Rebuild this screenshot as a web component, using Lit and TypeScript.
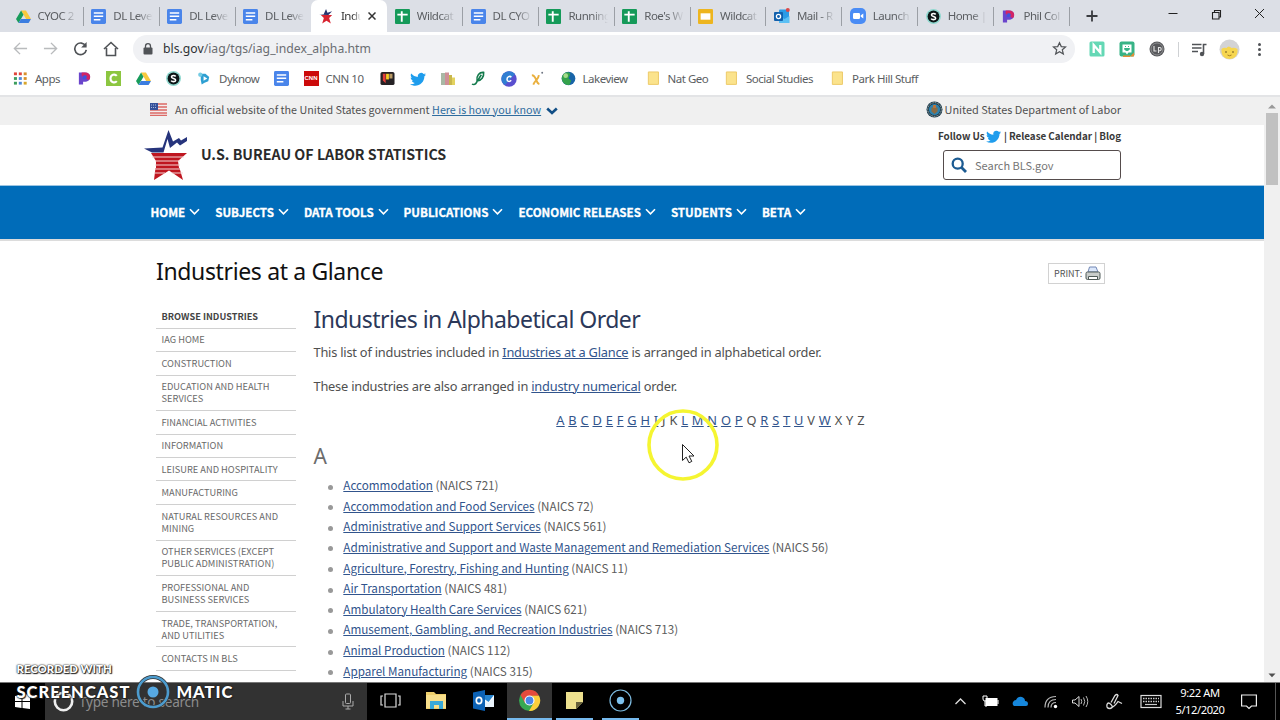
import { LitElement, html, svg, css } from "lit";
import { customElement } from "lit/decorators.js";

const box = (size: number, body: unknown, view = "0 0 16 16") =>
  html`<svg width=${size} height=${size} viewBox=${view} fill="none">${body}</svg>`;

const bird = svg`<path d="M16 3.500c-.6.300-1.200.5-1.800.5.700-.4 1.100-1 1.400-1.700-.6.300-1.300.6-2 .7a3.300 3.300 0 0 0-5.700 3C5.200 5.900 2.800 4.600 1.200 2.600c-.9 1.500-.4 3.400 1 4.300-.5 0-1-.2-1.500-.4 0 1.600 1.100 2.900 2.600 3.200-.5.100-1 .2-1.400.1.400 1.300 1.600 2.200 3 2.200A6.600 6.600 0 0 1 0 13.300c6.700 4 14.500-.6 14.400-8.100.6-.4 1.200-1 1.600-1.700z" fill="#1f9ded"/>`;

const icons: Record<string, unknown> = {
  drive: box(15, svg`<path d="M5.4 1.5h5.2L16 10.6h-5.2z" fill="#f8c93e"/><path d="M5.4 1.5 8 6 2.7 14.8 0 10.6z" fill="#189c5b"/><path d="M5.3 10.6H16l-2.6 4.2H2.7z" fill="#3b7de0"/>`),
  docs: box(15, svg`<rect width="16" height="16" rx="1.5" fill="#4a85ea"/><path d="M3 4.2h10M3 7.8h10M3 11.5h7" stroke="#fff" stroke-width="1.7"/>`),
  sheets: box(15, svg`<rect width="16" height="16" rx="1.2" fill="#159a59"/><path d="M7.2 2.5v11M2.5 6h11" stroke="#fff" stroke-width="2"/>`),
  slides: box(15, svg`<rect width="16" height="16" rx="1.2" fill="#edb51f"/><rect x="2.8" y="4.6" width="10.4" height="6.8" fill="#fff"/>`),
  star: box(15, svg`<path d="m0 6 5-.3L7.500 0l1.500 4 5-1.500-4 4z" fill="#26356f"/><path d="M2 6.500h12l-3.200 3 1.800 6-4.600-3-4.600 3 1.800-6z" fill="#d8232f"/>`),
  outlook: box(16, svg`<rect x="5" y="1.500" width="10" height="12" rx="1" fill="#2a9be6"/><path d="M5 8l5.500 3L15.500 8v7H5z" fill="#5bc0f4"/><rect y="4" width="9" height="9" rx="1" fill="#1261ad"/><circle cx="4.500" cy="8.500" r="2.100" stroke="#fff" stroke-width="1.300"/><circle cx="13.800" cy="2" r="2" fill="#d84848"/>`),
  zoom: box(16, svg`<rect width="16" height="16" rx="5" fill="#4a8cf5"/><rect x="3" y="5" width="7" height="6" rx="1.200" fill="#fff"/><path d="m10.600 7.500 2.700-2v5l-2.700-2z" fill="#fff"/>`),
  esse: box(15, svg`<circle cx="8" cy="8" r="8" fill="#8fd8cf"/><circle cx="8" cy="8" r="6.300" fill="#0b1516"/><path d="M10.300 5.800C9.500 4.600 6 4.300 5.900 6.300c0 2 4.400 1.400 4.400 3.500 0 2-3.900 1.900-4.800.4" stroke="#fff" stroke-width="1.700"/>`),
  pandora: box(15, svg`<path fill-rule="evenodd" d="M2 1.500h6.500c3.500 0 5.500 1.800 5.500 4.700 0 3.300-2.300 5.300-6 5.300H6.500v3H2z" fill="#6a45cc"/><path d="M5 1.500h3.500c3.500 0 5.500 1.800 5.500 4.700 0 1.500-.5 2.800-1.300 3.700L5 5z" fill="#d32464"/><path d="M7 4.500h1.500q2 0 2 1.900T8 8.500H6z" fill="#3d55dd"/>`),
  cgreen: box(15, svg`<rect width="16" height="16" fill="#8cc640"/><path d="M11.500 5.200C9.500 2.700 4.800 3.800 4.800 8s4.700 5.300 6.700 2.800" stroke="#fff" stroke-width="2.200"/>`),
  dyknow: box(15, svg`<path d="M4 3h5l4 3.500-1 4.500-4 1.500-3 2-1-5z" fill="#2d9fd2"/><path d="M7 5.500v5l4-2.500z" fill="#fff"/><circle cx="3.500" cy="4" r="2.300" fill="#74cbe3"/>`),
  cnn: html`<span class="cnn">CNN</span>`,
  palette: box(15, svg`<rect x=".5" y="1" width="15" height="14" rx="2" fill="#262225"/><path d="M3 3h3v10L3 10z" fill="#e43e3a"/><path d="M6.500 3h3v6h-3z" fill="#f9cf25"/><path d="M10 3h3.300v5H10z" fill="#b99a65"/>`),
  twitter: box(16, bird),
  books: box(16, svg`<path d="M1 2h4v12H1z" fill="#a9b8a5"/><path d="M5 1.500h4V14H5z" fill="#cf8f97"/><path d="M9 4h3v10H9z" fill="#c8b74d"/><path d="M12 6.500h3V14h-3z" fill="#e3d25f"/>`),
  leaf: box(15, svg`<path d="M13.500 1.500C9 1 5.500 5 6.500 10.500 11 10.500 14 6 13.500 1.500zM11 4 5 13.500q-1.500 1.500-4 .5" stroke="#137a4c" stroke-width="1.700"/>`),
  canva: box(16, svg`<circle cx="8" cy="8" r="7.700" fill="#5a4fcf"/><path d="M.8 5.500A7.700 7.700 0 0 1 14 3L4 14A7.700 7.700 0 0 1 .8 5.500" fill="#307ed2"/><path d="M10.300 6.200C9 4.500 6 5.800 6 8.300c0 2.400 2.800 2.800 4.200 1" stroke="#fff" stroke-width="1.500"/>`),
  xfig: box(15, svg`<path d="M2 4.500c5 0 4 8.500 8 9.500M9.500 4.500C9 9 6 9 3.500 14.500" stroke="#eab03e" stroke-width="2"/><circle cx="13" cy="1.800" r="1" fill="#6c7380"/>`),
  globe: box(15, svg`<circle cx="8" cy="8" r="7.300" fill="#1864a8"/><path d="M2 4C5 0 9 1 10 3L8 8l3 2-2 5C3 15 0 10 1 6z" fill="#35a24b"/><circle cx="5" cy="5" r="2.500" fill="#a6da8a"/>`),
  folder: box(15, svg`<path d="M2.500 1h10.800v11.500l-1 1.800H2.500z" fill="#fbe38c"/><path d="M2.500 1h10.800v13.300H2.500z" stroke="#ecc965"/>`),
};

const tabs: [string, string][] = [
  ["drive", "CYOC 2"], ["docs", "DL Level"], ["docs", "DL Level"], ["docs", "DL Level"], ["star", "Indus"],
  ["sheets", "Wildcat"], ["docs", "DL CYO"], ["sheets", "Running"], ["sheets", "Roe's W"], ["slides", "Wildcat"],
  ["outlook", "Mail - R"], ["zoom", "Launch"], ["esse", "Home |"], ["pandora", "Phil Col"],
];

const bookmarks: [string, string, number][] = [
  ["apps", "Apps", 63.5], ["pandora", "", 29], ["cgreen", "", 30.5], ["drive", "", 30], ["esse", "", 31],
  ["dyknow", "Dyknow", 76.5], ["docs", "", 30], ["cnn", "CNN 10", 76.5], ["palette", "", 30], ["twitter", "", 30],
  ["books", "", 31], ["leaf", "", 29.5], ["canva", "", 29.5], ["xfig", "", 30.5], ["globe", "Lakeview", 85],
  ["folder", "Nat Geo", 78.5], ["folder", "Social Studies", 106], ["folder", "Park Hill Stuff", 100],
];

const appColors = ["#e0453b", "#e0453b", "#d8902c", "#3c9d5c", "#4e87d8", "#d8902c", "#3c9d5c", "#4e87d8", "#d8a62c"];
icons.apps = box(15, appColors.map((c, i) => svg`<rect x=${1 + (i % 3) * 5.2} y=${1.5 + Math.floor(i / 3) * 5} width="3.2" height="3" fill=${c}/>`));

const menu = ["HOME", "SUBJECTS", "DATA TOOLS", "PUBLICATIONS", "ECONOMIC RELEASES", "STUDENTS", "BETA"];

const side = ["IAG HOME", "CONSTRUCTION", "EDUCATION AND HEALTH|SERVICES", "FINANCIAL ACTIVITIES", "INFORMATION",
  "LEISURE AND HOSPITALITY", "MANUFACTURING", "NATURAL RESOURCES AND|MINING", "OTHER SERVICES (EXCEPT|PUBLIC ADMINISTRATION)",
  "PROFESSIONAL AND|BUSINESS SERVICES", "TRADE, TRANSPORTATION,|AND UTILITIES", "CONTACTS IN BLS"];

const industries: [string, string][] = [
  ["Accommodation", "721"], ["Accommodation and Food Services", "72"], ["Administrative and Support Services", "561"],
  ["Administrative and Support and Waste Management and Remediation Services", "56"],
  ["Agriculture, Forestry, Fishing and Hunting", "11"], ["Air Transportation", "481"], ["Ambulatory Health Care Services", "621"],
  ["Amusement, Gambling, and Recreation Industries", "713"], ["Animal Production", "112"], ["Apparel Manufacturing", "315"],
];

@customElement("browser-chrome")
class BrowserChrome extends LitElement {
  static styles = css`
    :host { display: block; font-family: "Noto Sans", "Open Sans", sans-serif; color: #5b5e62; font-size: 11.500px; }
    svg { display: block; flex: none; }
    .tabs { display: flex; height: 32px; background: #dcdfe6; padding-left: 8px; }
    .tab { width: 75.85px; display: flex; align-items: center; box-sizing: border-box; padding: 0 7px 0 7.5px; gap: 7px; position: relative; }
    .tab.sep::after { content: ""; position: absolute; right: 0; top: 7px; height: 19px; width: 1px; background: #9b9fa5; }
    .active { background: #fff; border-radius: 7px 7px 0 0; }
    .title { flex: 1; white-space: nowrap; overflow: hidden; line-height: 18px; letter-spacing: -.5px;
      -webkit-mask-image: linear-gradient(90deg, #000 60%, transparent 100%); mask-image: linear-gradient(90deg, #000 60%, transparent 100%); }
    .active .title { flex: none; width: 20px; color: #333; }
    .window { flex: 1; display: flex; align-items: center; }
    .plus { margin-left: 16px; }
    .min { margin-left: 70px; }
    .max { margin-left: 33px; }
    .close { margin-left: 32px; margin-top: -5px; }
    .min, .max { margin-top: -4px; }
    .bar { height: 33px; display: flex; align-items: center; background: #fff; padding-left: 13px; }
    .nav { display: flex; gap: 15px; width: 120px; }
    .url { width: 942px; height: 28px; border-radius: 14px; background: #f0f1f4; display: flex; align-items: center; box-sizing: border-box; padding: 0 8px 0 9px; font-size: 12.230px; color: #6a6d71; }
    .url span { flex: 1; margin-left: 9px; line-height: 18px; }
    .url b { font-weight: 400; color: #2f3235; }
    .ext { display: flex; align-items: center; }
    .marks { display: flex; align-items: center; background: #fff; padding: 0 0 3px 13px; border-bottom: 2px solid #e3e4e6; box-sizing: border-box; height: 32px; }
    .mark { display: flex; align-items: center; gap: 7px; white-space: nowrap; line-height: 18px; letter-spacing: -.48px; }
    .cnn { width: 15px; height: 15px; background: #cc0a0a; color: #fff; font: bold 6px/15px "Liberation Sans", sans-serif; text-align: center; letter-spacing: 0; }
  `;
  render() {
    return html`
      <div class="tabs">
        ${tabs.map(([icon, title], i) => html`<div class="tab ${i === 4 ? "active" : i === 3 ? "" : "sep"}">
          ${icons[icon]}<span class="title">${title}</span>
          ${i === 4 ? box(8, svg`<path d="m.5.5 7 7M7.500.5l-7 7" stroke="#333" stroke-width="1.500"/>`, "0 0 8 8") : ""}
        </div>`)}
        <div class="window">
          <div class="plus">${box(12, svg`<path d="M6 .5v11M.5 6h11" stroke="#3a3c40" stroke-width="1.800"/>`, "0 0 12 12")}</div>
          <div class="min">${box(10, svg`<path d="M.5 4.500h9" stroke="#222"/>`, "0 0 10 10")}</div>
          <div class="max">${box(11, svg`<path d="M1.500 3.500h6.500v6.500h-6.500zM3.500 3V1.500h6v6.500H8" stroke="#222" stroke-width="1.100"/>`, "0 0 11 11")}</div>
          <div class="close">${box(11, svg`<path d="m1 1 9 9M10 1l-9 9" stroke="#222"/>`, "0 0 11 11")}</div>
        </div>
      </div>
      <div class="bar">
        <div class="nav">
          ${box(15, svg`<path d="M15 8H2M7.500 2 1.500 8l6 6" stroke="#b9bbbd" stroke-width="1.500"/>`)}
          ${box(15, svg`<path d="M1 8h13M8.500 2l6 6-6 6" stroke="#b9bbbd" stroke-width="1.500"/>`)}
          ${box(15, svg`<path d="M13.600 5.500A6.200 6.200 0 1 0 14.200 9.500" stroke="#505357" stroke-width="1.800"/><path d="M14.500 1v6H8.700z" fill="#505357"/>`)}
          ${box(16, svg`<path d="M1 8 8 1.500 15 8M3.500 7v7.500h9V7" stroke="#505357" stroke-width="1.600"/>`)}
        </div>
        <div class="url">
          ${box(12, svg`<rect x="1.500" y="4.500" width="9" height="7" rx="1" fill="#505357"/><path d="M3.500 5V3.200a2.500 2.500 0 0 1 5 0V5" stroke="#505357" stroke-width="1.300"/>`, "0 0 12 12")}
          <span><b>bls.gov</b>/iag/tgs/iag_index_alpha.htm</span>
          ${box(15, svg`<path d="m8 1.800 1.900 4.200 4.600.4-3.500 3 1.100 4.500L8 11.500l-4.100 2.400L5 9.400l-3.500-3L6.100 6z" stroke="#505357" stroke-width="1.300"/>`)}
        </div>
        <div class="ext">
          <svg width="190" height="24" viewBox="0 0 190 24">
            <rect x="14.500" y="4.500" width="15" height="15" rx="1.500" fill="#64d8b5"/><path d="M18.700 16V8l6.600 7.500V8" stroke="#fff" stroke-width="2.300" fill="none"/>
            <rect x="44.500" y="4.500" width="15" height="15" rx="2" fill="#37b386"/><path d="M55 19.500h4v-4zM48 18.500h7v1.500h-7z" fill="#e58d35"/><path d="M47.500 7.500h9v8h-3l-1.500 2-1.500-2h-3z" fill="#fff"/><path d="M49.500 11.500h5c-.2 2.700-4.800 2.700-5 0M50 9.500h1m2 0h1" fill="#37b386" stroke="#37b386"/>
            <circle cx="82" cy="12" r="7.500" fill="#58595c"/><circle cx="82" cy="12" r="6" fill="none" stroke="#8d8e90"/><path d="M79 9v5h2.500M83.500 16v-5.500h1.300q1.400 0 1.400 1.600t-1.400 1.600h-1" stroke="#e6e6e6" stroke-width="1.100" fill="none"/>
            <path d="M103.500 5v15" stroke="#cfd1d4"/>
            <path d="M117 7.500h9.500M117 11h9.500M117 14.500h6M128.500 17V7.500h3" stroke="#505357" stroke-width="1.600" fill="none"/><circle cx="127" cy="17" r="2.200" fill="#505357"/>
            <circle cx="154.500" cy="12.500" r="10" fill="#d3d3d5"/><path d="M146.500 12q2-2 5-1 2-3 5 0 3-1 6 1v3q-1 7-8 7t-8-7z" fill="#f6d650"/><circle cx="151" cy="15" r=".8" fill="#5b481b"/><circle cx="158" cy="15" r=".8" fill="#5b481b"/><path d="M152.500 18q2 1.500 4 0" stroke="#a67f24" fill="none"/>
            <circle cx="184.500" cy="7.500" r="1.500" fill="#505357"/><circle cx="184.500" cy="12.500" r="1.500" fill="#505357"/><circle cx="184.500" cy="17.500" r="1.500" fill="#505357"/>
          </svg>
        </div>
      </div>
      <div class="marks">
        ${bookmarks.map(([icon, label, w]) => html`<div class="mark" style="width:${w}px">${icons[icon]}<span>${label}</span></div>`)}
      </div>`;
  }
}

@customElement("bls-page")
class BlsPage extends LitElement {
  static styles = css`
    :host { display: flex; background: #fff; overflow: hidden; font-family: "Noto Sans CJK SC", "Noto Sans", sans-serif; color: #505050; }
    svg { display: block; flex: none; }
    .page { width: 1264px; flex: none; }
    .scroll { flex: 1; background: #f0f0f0; display: flex; flex-direction: column; align-items: center; justify-content: space-between; padding: 7px 0 4px; box-sizing: border-box; }
    .thumb { width: 12px; height: 72px; background: #c1c1c1; margin-top: 4px; }
    .thumbwrap { display: flex; flex-direction: column; align-items: center; }
    .gov { height: 28px; background: #f0f0f0; display: flex; align-items: center; padding: 0 143px 3px 150px; box-sizing: border-box; font-size: 10.740px; line-height: 16px; white-space: nowrap; }
    .gov .msg { margin-left: 8px; }
    .gov a, .link { color: #2f6c9e; text-decoration: underline; text-underline-offset: 1px; text-decoration-thickness: 1px; }
    .dol { margin-left: auto; display: flex; align-items: center; gap: 2px; font-size: 10.920px; }
    .dol span { margin-top: -2px; }
    .chev { margin-left: 5px; margin-top: 3px; }
    .head { height: 61px; display: flex; padding: 0 143px 0 144px; box-sizing: border-box; border-bottom: 1px solid #9cc5e3; }
    .logo { padding-top: 5px; }
    .name { margin: 18px 0 0 12px; font-size: 14.250px; line-height: 22px; font-weight: 700; color: #2a2a2a; white-space: nowrap; }
    .tools { margin-left: auto; display: flex; flex-direction: column; align-items: flex-end; }
    .follow { display: flex; align-items: center; gap: 1.500px; font-weight: 700; font-size: 9.850px; letter-spacing: -.03px; line-height: 16px; height: 16px; margin-top: 3px; color: #3a3a3a; white-space: pre; }
    .follow svg { margin-right: -1px; }
    .search { width: 178px; height: 30px; border: 1px solid #554c4c; border-radius: 3px; margin-top: 6px; box-sizing: border-box; display: flex; align-items: center; padding: 0 0 1px 6.500px; gap: 8.500px; color: #757575; font-size: 11px; line-height: 16px; }
    .menu { height: 53px; background: #006cb9; display: flex; align-items: center; padding: 0 0 1px 150.500px; box-sizing: border-box; gap: 15px; color: #fff; font-weight: 700; font-size: 11.590px; line-height: 18px; white-space: nowrap; -webkit-text-stroke: .3px #fff; }
    .shade { height: 2px; background: #dcdcdc; }
    .item { display: flex; align-items: center; gap: 4px; }
    .title { display: flex; justify-content: space-between; padding: 15px 159px 0 156px; height: 60px; box-sizing: border-box; }
    .title h1 { margin: 0; font: 400 23px/30px "Noto Sans", sans-serif; letter-spacing: -.36px; color: #111; white-space: nowrap; }
    .print { margin-top: 7px; width: 57px; height: 21px; box-sizing: border-box; border: 1px solid #d2d2d2; display: flex; align-items: center; padding-left: 5px; gap: 3px; font-size: 9px; line-height: 12px; color: #555; }
    .cols { display: flex; padding-left: 156px; }
    .side { width: 140px; padding-top: 3.500px; font-size: 9.270px; line-height: 12.200px; color: #6a6a6a; }
    .side div { padding: 4.700px 0 5.550px 5.500px; border-bottom: 1px solid #d0d0d0; white-space: nowrap; }
    .side .top { font-weight: 700; color: #444; padding-top: 5.400px; font-size: 9.200px; }
    .main { margin-left: 17.500px; width: 790px; font: 12.800px/20px "Noto Sans", sans-serif; letter-spacing: -.21px; }
    .main h2 { margin: 2px 0 6px; font: 400 23px/33px "Noto Sans", sans-serif; letter-spacing: -.54px; color: #2b3859; white-space: nowrap; }
    .main p { margin: 0 0 14px; white-space: nowrap; }
    .main .link { color: #31548c; }
    .main .abc { text-align: center; margin-bottom: 0; padding-left: 4px; letter-spacing: .27px; }
    .main h3 { margin: 11px 0 4px; font: 400 21px/30px "Noto Sans", sans-serif; color: #6c6c6c; }
    .main ul { margin: 0; padding: 0; list-style: none; font-family: "Noto Sans CJK SC", sans-serif; font-size: 11.680px; letter-spacing: 0; color: #5c5c5c; }
    .main li { height: 20.640px; line-height: 20.640px; display: flex; align-items: center; white-space: pre; padding-left: 14.800px; }
    .main li::before { content: ""; width: 5px; height: 5px; border-radius: 50%; background: #999; margin: 3.500px 10px 0 0; }
  `;
  render() {
    const linked = "ABCDEFGHILMNOPRSTUW";
    return html`
      <div class="page">
        <div class="gov">
          <svg width="17" height="13" viewBox="0 0 17 13"><rect width="17" height="13" fill="#f3eeee"/><path d="M0 1h17M0 4h17M0 7h17M0 10h17M0 12.500h17" stroke="#dc6a66" stroke-width="1.300"/><rect width="8" height="7" fill="#35509a"/><path d="M1 2h6M1 4.500h6" stroke="#aab6d9" stroke-dasharray="1 1"/></svg>
          <span class="msg">An official website of the United States government <a>Here is how you know</a></span>
          <svg class="chev" width="12" height="8" viewBox="0 0 12 8"><path d="m1.200 1.500 4.800 4.500 4.800-4.500" stroke="#124f86" stroke-width="2.600" fill="none"/></svg>
          <span class="dol">${box(17, svg`<circle cx="8.500" cy="8.500" r="8" fill="#19384a"/><circle cx="8.500" cy="8.500" r="6.800" stroke="#e5e0cf" stroke-width=".8" stroke-dasharray="1 .7"/><circle cx="8.500" cy="8.500" r="5.600" fill="#2d83b0"/><path d="M5.500 6.500h6v4l-3 2.500-3-2.500z" fill="#8b6b43"/><path d="M7 4h3v3H7z" fill="#b9743a"/>`, "0 0 17 17")}<span>United States Department of Labor</span></span>
        </div>
        <div class="head">
          <svg class="logo" width="45" height="51" viewBox="0 0 45 51">
            <path d="M0 18.500 18.500 17.500 24.500 0 29 11.500l6-3.500 2 2.500L43 7v4l-7 4.500-3-3-7 5.500-2.500-9-4 13.500H8z" fill="#26347c"/>
            <path d="M7 23h36l-9 8H12z M12 31h22l1 7H12z M11.500 38h24l3.500 12-14-9.500L10 50z" fill="#bf1620"/>
            <path d="M8 27h32M11 31h25M11 35h25M11 39h25M10 43h11M28 43h11" stroke="#f6d5d5" stroke-width="1.100"/>
          </svg>
          <div class="name">U.S. BUREAU OF LABOR STATISTICS</div>
          <div class="tools">
            <div class="follow"><span>Follow Us</span>${box(15, bird)}<span> | Release Calendar | Blog</span></div>
            <div class="search">${box(16, svg`<circle cx="6.700" cy="6.700" r="5" stroke="#1c5b92" stroke-width="2.300"/><path d="m10.300 10.300 4.700 4.700" stroke="#1c5b92" stroke-width="2.800"/>`)}Search BLS.gov</div>
          </div>
        </div>
        <div class="menu">
          ${menu.map((m) => html`<div class="item">${m}<svg width="11" height="8" viewBox="0 0 11 8"><path d="m1 1.200 4.500 4.600L10 1.200" stroke="#fff" stroke-width="1.600" fill="none"/></svg></div>`)}
        </div>
        <div class="shade"></div>
        <div class="title"><h1>Industries at a Glance</h1>
          <div class="print">PRINT:<svg width="16" height="16" viewBox="0 0 16 16"><path d="M3 6 4.500 1h6.500l2 5z" fill="#dbe7fb" stroke="#7388b5"/><rect x="1" y="6" width="14" height="7.500" rx="1.500" fill="#c9cdcb" stroke="#4f5a58"/><path d="M3.500 13.500v-3h9v3z" fill="#fff" stroke="#4f5a58"/></svg></div>
        </div>
        <div class="cols">
          <div class="side"><div class="top">BROWSE INDUSTRIES</div>
            ${side.map((s) => html`<div>${s.split("|").map((t, i) => (i ? html`<br />${t}` : t))}</div>`)}
          </div>
          <div class="main">
            <h2>Industries in Alphabetical Order</h2>
            <p>This list of industries included in <a class="link">Industries at a Glance</a> is arranged in alphabetical order.</p>
            <p>These industries are also arranged in <a class="link">industry numerical</a> order.</p>
            <p class="abc">${[..."ABCDEFGHIJKLMNOPQRSTUVWXYZ"].map((c) => (linked.includes(c) ? html`<a class="link">${c}</a> ` : html`${c} `))}</p>
            <h3>A</h3>
            <ul>${industries.map(([n, code]) => html`<li><a class="link">${n}</a> (NAICS ${code})</li>`)}</ul>
          </div>
        </div>
      </div>
      <div class="scroll">
        <div class="thumbwrap"><svg width="8" height="5" viewBox="0 0 8 5"><path d="m0 4.500 4-4 4 4z" fill="#999"/></svg><div class="thumb"></div></div>
        <svg width="8" height="5" viewBox="0 0 8 5"><path d="m.5.5 3.500 3.800L7.500.5z" fill="#505050"/></svg>
      </div>`;
  }
}

@customElement("task-bar")
class TaskBar extends LitElement {
  static styles = css`
    :host { display: flex; background: #000; height: 38px; font-family: "Noto Sans", "Open Sans", sans-serif; border-top: 1px solid #777; box-sizing: border-box; }
    svg { display: block; }
    .start { width: 45px; display: flex; align-items: center; padding-left: 15px; box-sizing: border-box; }
    .find { width: 322px; background: #323232; display: flex; align-items: center; box-sizing: border-box; padding: 0 13px 0 8px; color: #8c8c8c; font-size: 13.600px; letter-spacing: -.27px; gap: 5px; }
    .find span { flex: 1; line-height: 18px; white-space: nowrap; }
    .app { width: 46.500px; display: flex; align-items: center; justify-content: center; box-sizing: border-box; border-bottom: 2px solid transparent; }
    .apps { display: flex; }
    .app.run { width: 37px; margin: 0 4.500px; border-bottom-color: #76b9ed; }
    .app.on { width: 45px; margin: 0; background: #343434; }
    .tray { margin-left: auto; display: flex; align-items: center; }
    .clock { width: 66px; text-align: center; color: #fff; font-size: 11.200px; line-height: 16.500px; letter-spacing: -.45px; }
    .note { margin-left: 8px; }
    .edge { width: 1px; height: 37px; background: #555; margin: 0 4px 0 18px; }
  `;
  render() {
    const cells = [
      ["", svg`<path d="M6 5h11v13H6zM4 7H2v9h2M19 7h2v9h-2" stroke="#ddd" stroke-width="1.200"/>`],
      ["", svg`<path d="M1 3h8l2 2h10v15H1z" fill="#efcf6b"/><path d="M1 6h20v13H1z" fill="#f8df8b"/><path d="M5 20v-8h13v8h-4v-4H9v4z" fill="#39a9d8"/>`],
      ["", svg`<path d="M11 6h11v12H11z" fill="#fff"/><path d="M11 6h11l-5.500 7L11 9z" fill="#2785d0"/><path d="m12 10 4 4 6-6v10H12z" fill="#eaf4fc"/><path d="M1 3.500 13 1v21L1 19.500z" fill="#0c62b5"/><ellipse cx="7" cy="11.500" rx="2.700" ry="3.200" stroke="#fff" stroke-width="1.700"/>`],
      ["run on", svg`<circle cx="11.500" cy="11.500" r="10.500" fill="#36a852"/><path d="M2.500 6A10.500 10.500 0 0 1 21 6.700L11.500 7 7 14z" fill="#e44a3c"/><path d="M21 6.700A10.500 10.500 0 0 1 11 22l5-8.500-2-6.800z" fill="#fbcf3b"/><circle cx="11.500" cy="11.500" r="5" fill="#fff"/><circle cx="11.500" cy="11.500" r="3.900" fill="#4a86e8"/>`],
      ["run", svg`<path d="M3 3h17v10l-7 7H3z" fill="#ede08e"/><path d="M13 20v-7h7z" fill="#655f3b"/>`],
      ["run", svg`<circle cx="11.500" cy="11.500" r="10.500" stroke="#7dbbe0" stroke-width="1.200"/><circle cx="11.500" cy="11.500" r="3.700" fill="#7dc2ee"/>`],
    ] as const;
    return html`
      <div class="start"><svg width="15" height="15" viewBox="0 0 15 15"><path d="M0 2l6.500-1v6H0zM7.500 1 15 0v7H7.500zM0 8h6.500v6L0 13zM7.500 8H15v7l-7.500-1z" fill="#fff"/></svg></div>
      <div class="find">
        <svg width="21" height="21" viewBox="0 0 21 21"><circle cx="10.500" cy="10.500" r="8.700" stroke="#eee" stroke-width="2.600" fill="none"/></svg>
        <span>Type here to search</span>
        <svg width="12" height="17" viewBox="0 0 12 17"><rect x="3.500" y="1" width="5" height="9.500" rx="1" stroke="#aaa" fill="none"/><path d="M1 8v5h10V8M6 13v3M3.500 16h5" stroke="#aaa" fill="none"/></svg>
      </div>
      <div class="apps">${cells.map(([cls, art]) => html`<div class="app ${cls}">${box(23, art, "0 0 23 23")}</div>`)}</div>
      <div class="tray">
        <svg width="220" height="30" viewBox="0 0 220 30" fill="none">
          <path d="m8.500 17 5-5 5 5" stroke="#ddd" stroke-width="1.300"/>
          <rect x="38.500" y="11" width="12" height="8" fill="#fff"/><path d="M51 13v4" stroke="#fff"/><path d="M36 9v3q0 2 2 2t2-2v-3h-4M38 14v5h2" stroke="#fff"/>
          <path d="M67 19q-2-1-1-4 1-2 3-2 2-4 6-3 3 1 3 4 3 0 3 3 0 2-2 2z" fill="#1687dc"/>
          <circle cx="108.500" cy="19.500" r="1.700" fill="#fff"/><path d="M98 20.500q0-11 11-11M101 20.500q0-8 8-8M104 20.500q0-5 5-5" stroke="#b8b8b8" stroke-width="1.200"/>
          <path d="M125.500 13h2.500l4-3.500v10l-4-3.500H125.500z" stroke="#ddd"/><path d="M134 12q1.500 2.500 0 5M136.500 10.500q2.500 4 0 8M139 9q3.500 5.500 0 11" stroke="#bbb"/>
          <path d="M160 17.500q-1 4 3 4 4-1 1-4-3-3-4 0M163 21.500q5-2 8-7l4 2M164 15.500l4-7q2-2 3 0l-4 8" stroke="#ddd" stroke-width="1.300"/>
          <rect x="194" y="8.500" width="20" height="12" stroke="#ddd" stroke-width="1.200"/><path d="M196 11.500h16M196 14.500h16" stroke="#ccc" stroke-width="1.400" stroke-dasharray="1.500 1"/><path d="M198 17.500h12" stroke="#ccc" stroke-width="1.200"/>
        </svg>
        <div class="clock">9:22 AM<br />5/12/2020</div>
        <svg class="note" width="16" height="16" viewBox="0 0 16 16"><path d="M.6 1h14.800v11H10.500L8 14.500 5.500 12H.6z" stroke="#eee" stroke-width="1.200" fill="none"/></svg>
        <div class="edge"></div>
      </div>`;
  }
}

@customElement("app-root")
class AppRoot extends LitElement {
  static styles = css`
    :host { display: flex; flex-direction: column; width: 1280px; height: 720px; position: relative; overflow: hidden; background: #fff; }
    bls-page { flex: 1; min-height: 0; }
    .ring { position: absolute; left: 646px; top: 408px; }
    .mark { position: absolute; left: 16.500px; top: 660px; color: #fff; font-family: Lato, sans-serif; font-weight: 900; white-space: nowrap; text-shadow: 0 0 2px #222, 1px 1px 1px #222, 0 0 1px #000; }
    .rec { font-size: 11.400px; line-height: 17px; letter-spacing: -.02px; }
    .som { display: flex; align-items: center; gap: 6px; font-size: 16.500px; line-height: 30px; letter-spacing: 1px; height: 29px; }
  `;
  render() {
    return html`
      <browser-chrome></browser-chrome>
      <bls-page></bls-page>
      <task-bar></task-bar>
      <svg class="ring" width="74" height="74" viewBox="0 0 74 74" fill="none"><circle cx="37" cy="37" r="34" stroke="#f5f531" stroke-width="3.600"/><path d="M36.500 36.500v16l3.700-3.400 2.800 5.700 2.800-1.400-2.800-5.400h5z" fill="#fff" stroke="#222"/></svg>
      <div class="mark">
        <div class="rec">RECORDED WITH</div>
        <div class="som">SCREENCAST<svg width="34" height="34" viewBox="0 0 34 34" fill="none"><circle cx="17" cy="17" r="15" stroke="#333" stroke-width="4"/><circle cx="17" cy="17" r="15" stroke="#4c9bcd" stroke-width="2.600"/><circle cx="17" cy="17" r="5.500" fill="#57a9e2"/></svg>MATIC</div>
      </div>`;
  }
}
